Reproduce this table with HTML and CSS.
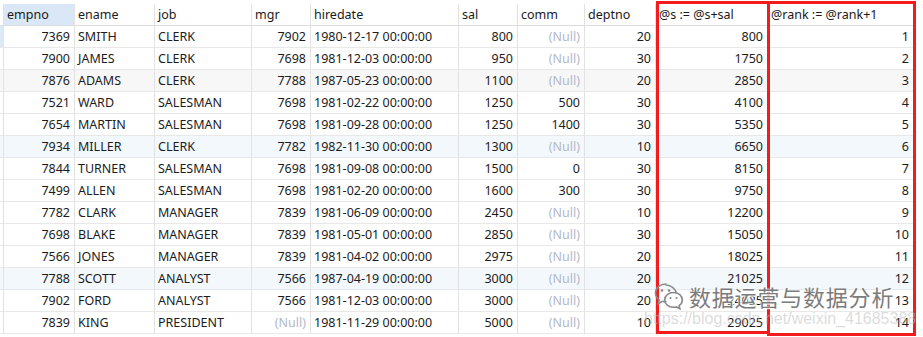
FILE: index.html
```html
<!DOCTYPE html>
<html lang="en">
  <head>
    <meta charset="UTF-8" />
    <meta name="viewport" content="width=device-width" />
    <title>Running total - emp</title>
    <link rel="stylesheet" href="styles.css">
  </head>
  <body>
    <div class="grid-wrap">
      <table class="grid">
        <colgroup>
          <col class="c-ind" />
          <col class="c-empno" />
          <col class="c-ename" />
          <col class="c-job" />
          <col class="c-mgr" />
          <col class="c-hire" />
          <col class="c-sal" />
          <col class="c-comm" />
          <col class="c-dept" />
          <col class="c-sum" />
          <col class="c-rank" />
        </colgroup>
        <thead>
          <tr>
            <th class="ind"></th>
            <th class="selected">empno</th>
            <th>ename</th>
            <th>job</th>
            <th>mgr</th>
            <th>hiredate</th>
            <th>sal</th>
            <th>comm</th>
            <th>deptno</th>
            <th>@s := @s+sal</th>
            <th>@rank := @rank+1</th>
          </tr>
        </thead>
        <tbody id="rows"></tbody>
      </table>

      <!-- red boxes drawn over the two computed columns -->
      <div class="mark mark-sum"></div>
      <div class="mark mark-rank"></div>

      <!-- blog watermark -->
      <div class="watermark">
        <svg class="wm-icon" width="30" height="28" viewBox="0 0 30 28">
          <path d="M12 2C6 2 1.5 6 1.5 11c0 2.8 1.4 5.2 3.7 6.9L4.3 21.6l4.3-2.3c1.1.3 2.2.5 3.4.5"
                fill="none" stroke="#8a8a8a" stroke-width="1.6" stroke-linecap="round" />
          <path d="M22.5 11.5c-1-4.8-5.6-8.5-11-8.5" fill="none" stroke="#8a8a8a" stroke-width="1.6" />
          <path d="M19.5 10.5c-5 0-8.8 3.3-8.8 7.4s3.8 7.4 8.8 7.4c1 0 1.9-.1 2.8-.4l3.6 1.9-.8-3.1c2-1.4 3.2-3.4 3.2-5.8 0-4.1-3.8-7.4-8.8-7.4z"
                fill="none" stroke="#8a8a8a" stroke-width="1.6" />
          <circle cx="8" cy="8.5" r="1.3" fill="#8a8a8a" />
          <circle cx="15" cy="8.5" r="1.3" fill="#8a8a8a" />
          <circle cx="16.5" cy="16" r="1.1" fill="#8a8a8a" />
          <circle cx="22.5" cy="16" r="1.1" fill="#8a8a8a" />
        </svg>
        <span class="wm-title">数据运营与数据分析</span>
      </div>
      <div class="wm-url">https://blog.csdn.net/weixin_41685388</div>
    </div>

    <script>
      // emp rows plus the running sum / rank columns
      const emps = [
        [7369, "SMITH", "CLERK", 7902, "1980-12-17 00:00:00", 800, null, 20],
        [7900, "JAMES", "CLERK", 7698, "1981-12-03 00:00:00", 950, null, 30],
        [7876, "ADAMS", "CLERK", 7788, "1987-05-23 00:00:00", 1100, null, 20],
        [7521, "WARD", "SALESMAN", 7698, "1981-02-22 00:00:00", 1250, 500, 30],
        [7654, "MARTIN", "SALESMAN", 7698, "1981-09-28 00:00:00", 1250, 1400, 30],
        [7934, "MILLER", "CLERK", 7782, "1982-11-30 00:00:00", 1300, null, 10],
        [7844, "TURNER", "SALESMAN", 7698, "1981-09-08 00:00:00", 1500, 0, 30],
        [7499, "ALLEN", "SALESMAN", 7698, "1981-02-20 00:00:00", 1600, 300, 30],
        [7782, "CLARK", "MANAGER", 7839, "1981-06-09 00:00:00", 2450, null, 10],
        [7698, "BLAKE", "MANAGER", 7839, "1981-05-01 00:00:00", 2850, null, 30],
        [7566, "JONES", "MANAGER", 7839, "1981-04-02 00:00:00", 2975, null, 20],
        [7788, "SCOTT", "ANALYST", 7566, "1987-04-19 00:00:00", 3000, null, 20],
        [7902, "FORD", "ANALYST", 7566, "1981-12-03 00:00:00", 3000, null, 20],
        [7839, "KING", "PRESIDENT", null, "1981-11-29 00:00:00", 5000, null, 10],
      ];

      const shaded = { 3: "row-grey", 6: "row-blue", 12: "row-blue" };

      function cell(v, num) {
        if (v === null) return `<td class="num null">(Null)</td>`;
        return `<td${num ? ' class="num"' : ""}>${v}</td>`;
      }

      const body = document.getElementById("rows");
      let s = 0;
      emps.forEach((e, i) => {
        s += e[5];
        const tr = document.createElement("tr");
        if (shaded[i + 1]) tr.className = shaded[i + 1];
        tr.innerHTML =
          `<td class="ind${i === 0 ? " ind-on" : ""}"></td>` +
          cell(e[0], true) + cell(e[1]) + cell(e[2]) + cell(e[3], true) +
          cell(e[4]) + cell(e[5], true) + cell(e[6], true) + cell(e[7], true) +
          cell(s, true) + cell(i + 1, true);
        body.appendChild(tr);
      });
    </script>
  </body>
</html>
```

FILE: styles.css
```css
body {
  margin: 0;
  background: #fff;
  font-family: "Noto Sans", "Noto Sans CJK SC", sans-serif;
  font-size: 12.5px;
  color: #1c1c1c;
}

.grid-wrap {
  position: relative;
  width: 923px;
  height: 337px;
  overflow: hidden;
}

.grid {
  margin-top: 4px;
  width: 914px;
  table-layout: fixed;
  border-collapse: separate;
  border-spacing: 0;
}

.c-ind { width: 4px; }
.c-empno { width: 71px; }
.c-ename { width: 80px; }
.c-job { width: 97px; }
.c-mgr { width: 59px; }
.c-hire { width: 148px; }
.c-sal { width: 59px; }
.c-comm { width: 67px; }
.c-dept { width: 71px; }
.c-sum { width: 112px; }
.c-rank { width: 146px; }

th,
td {
  box-sizing: border-box;
  height: 22px;
  padding: 0 4px 0 3px;
  border-right: 1px solid #e2e2e2;
  border-bottom: 1px solid #e8e8e8;
  white-space: nowrap;
  overflow: hidden;
  line-height: 20px;
}

th {
  font-weight: normal;
  text-align: left;
  border-bottom-color: #dcdcdc;
  color: #1a1a1a;
}

th.selected {
  background: #d9e7f6;
}

.ind {
  padding: 0;
}

.ind-on {
  background: #dce9f7;
}

.num {
  text-align: right;
}

.null {
  color: #b3b9c7;
}

.row-grey td {
  background: #f7f7f7;
}

.row-blue td {
  background: #f3f8fd;
}

.mark {
  position: absolute;
  top: 1px;
  box-sizing: border-box;
  border: 3px solid #f31c1c;
}

.mark-sum {
  left: 656px;
  width: 114px;
  height: 333px;
}

.mark-rank {
  left: 767px;
  width: 149px;
  height: 335px;
}

.watermark {
  position: absolute;
  left: 654px;
  top: 280px;
  display: flex;
  align-items: center;
  gap: 5px;
}

.wm-title {
  font-family: "Noto Sans CJK SC", sans-serif;
  font-size: 22px;
  letter-spacing: 0.8px;
  color: #7c7c7c;
  text-shadow: 0 0 2px #fff, 0 0 2px #fff, 1px 1px 1px #fff;
}

.wm-url {
  position: absolute;
  left: 644px;
  top: 310px;
  font-family: "Liberation Sans", Arial, sans-serif;
  font-size: 16px;
  color: rgba(190, 190, 190, 0.55);
  white-space: nowrap;
}
```
